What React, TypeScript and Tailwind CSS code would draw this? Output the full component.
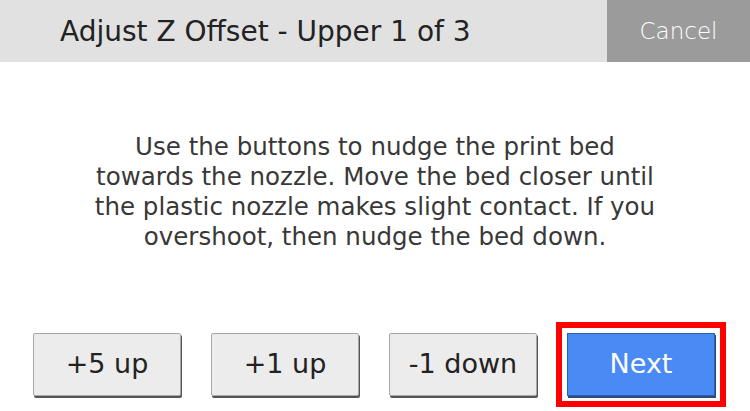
export default function App() {
  const steps = ["+5 up", "+1 up", "-1 down"];

  return (
    <div className="w-[750px] h-[411px] bg-white overflow-hidden font-['DejaVu_Sans',sans-serif]">
      {/* header */}
      <div className="flex h-[62px] bg-[#e1e1e1]">
        <div className="flex-1 flex items-center pl-[60px] pt-[2px] text-[28px] text-[#222]">
          Adjust Z Offset - Upper 1 of 3
        </div>
        <div className="w-[143px] flex items-center justify-center bg-[#9b9b9b] text-[23px] font-extralight text-white">
          Cancel
        </div>
      </div>

      {/* instructions */}
      <p className="mt-[70px] text-center text-[24.5px] leading-[30px] text-[#383838] whitespace-nowrap">
        Use the buttons to nudge the print bed
        <br />
        towards the nozzle. Move the bed closer until
        <br />
        the plastic nozzle makes slight contact. If you
        <br />
        overshoot, then nudge the bed down.
      </p>

      {/* buttons */}
      <div className="flex gap-[30px] pl-[33px] mt-[81px]">
        {steps.map((s) => (
          <button
            key={s}
            className="w-[148px] h-[63px] bg-[#ececec] border border-[#a8a8a8] rounded-[2px] shadow-[1px_2px_0_#555] text-[27px] text-[#222]"
          >
            {s}
          </button>
        ))}
        <button className="w-[148px] h-[63px] bg-[#4a8af5] border border-[#2c5fae] rounded-none shadow-[1px_2px_0_#2a4a80] text-[27px] text-white outline-[6px] outline-solid outline-[#ff0000] outline-offset-[5px]">
          Next
        </button>
      </div>
    </div>
  );
}
